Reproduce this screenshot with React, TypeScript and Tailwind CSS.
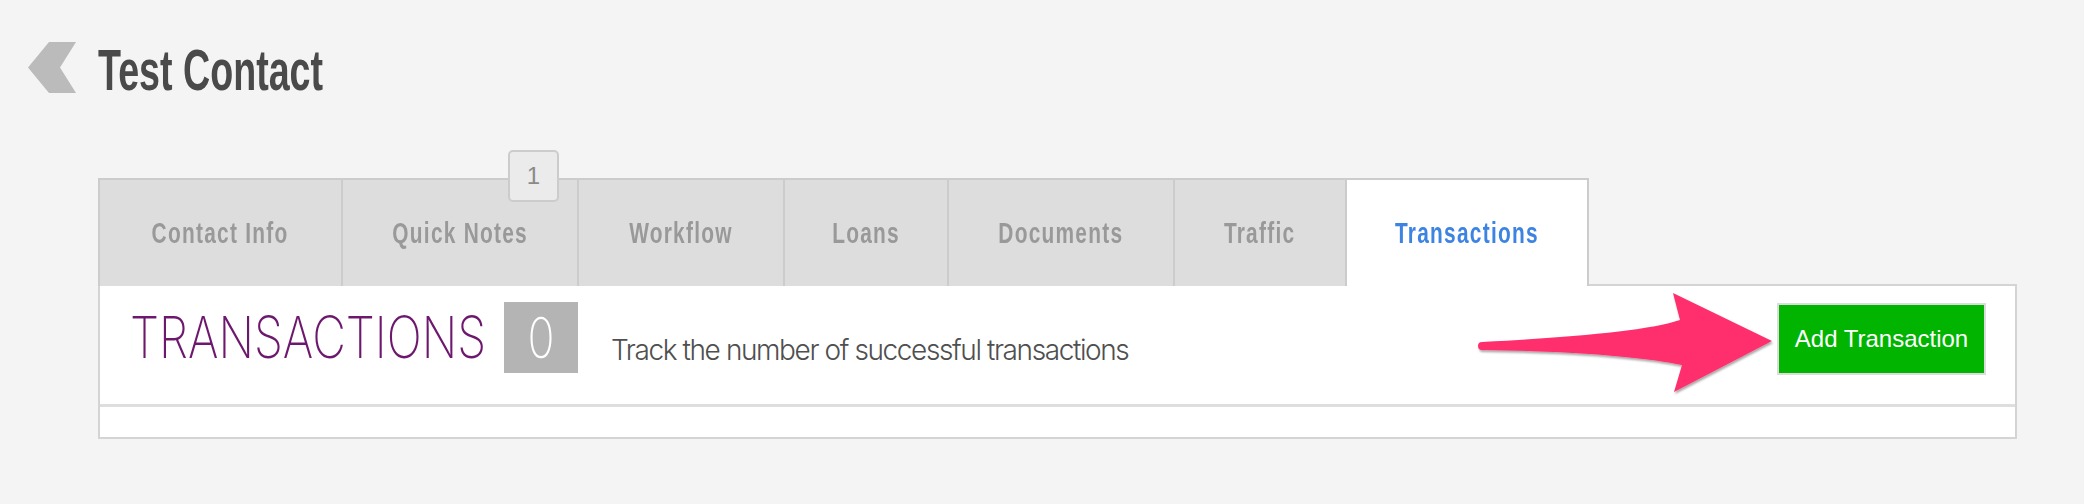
import React from 'react';

const tabs = [
  { id: 'contact', label: 'Contact Info', width: 'w-[243px]' },
  { id: 'notes', label: 'Quick Notes', width: 'w-[236px]', badge: 1 },
  { id: 'workflow', label: 'Workflow', width: 'w-[206px]' },
  { id: 'loans', label: 'Loans', width: 'w-[164px]' },
  { id: 'documents', label: 'Documents', width: 'w-[226px]' },
  { id: 'traffic', label: 'Traffic', width: 'w-[172px]' },
];

function BackChevron() {
  return (
    <svg width="48" height="51" viewBox="0 0 48 51" className="shrink-0">
      <polygon points="21,0 48,0 32,25.5 48,51 21,51 0,25.5" fill="#bbbbbb" />
    </svg>
  );
}

function Arrow() {
  return (
    <svg
      width="320"
      height="115"
      viewBox="0 0 320 115"
      className="absolute left-[1370px] top-[-1px] overflow-visible pointer-events-none"
    >
      <defs>
        <filter id="arrowShadow" x="-10%" y="-20%" width="120%" height="140%">
          <feDropShadow dx="1" dy="2" stdDeviation="1.3" floodColor="#000" floodOpacity="0.35" />
        </filter>
      </defs>
      <path
        d="M 12 57 C 110 52, 180 45, 210 35 L 203 8 L 302 56 L 204 107 L 212 80 C 180 73, 110 66, 12 65 A 4 4 0 0 1 12 57 Z"
        fill="#ff2f6d"
        filter="url(#arrowShadow)"
      />
    </svg>
  );
}

export default function App() {
  return (
    <div className="min-h-screen bg-[#f4f4f4] font-['Liberation_Sans',Arial,sans-serif]">
      {/* Header */}
      <header className="flex items-start h-[178px] pl-[28px] pt-[42px]">
        <BackChevron />
        <div className="ml-[22px] w-[226px]">
          <span className="inline-block origin-left scale-x-[0.66] whitespace-nowrap text-[57px] leading-none font-bold text-[#4a4a4a]">
            Test Contact
          </span>
        </div>
      </header>

      <div className="ml-[98px] w-[1919px]">
        {/* Tabs */}
        <div className="relative z-10 -mb-[2px] flex">
          {tabs.map((tab) => (
            <div
              key={tab.id}
              className={`relative ${tab.width} h-[108px] shrink-0 flex items-center justify-center bg-[#dddddd] border-t-2 border-l-2 border-[#cccccc]`}
            >
              <span className="inline-block scale-x-[0.72] whitespace-nowrap text-[29px] leading-none font-bold tracking-[0.06em] text-[#999999]">
                {tab.label}
              </span>
              {tab.badge && (
                <div className="absolute left-[165px] top-[-30px] w-[51px] h-[52px] rounded-[5px] border-2 border-[#cccccc] bg-[#ebebeb] flex items-center justify-center text-[24px] leading-none text-[#8a8a8a]">
                  {tab.badge}
                </div>
              )}
            </div>
          ))}
          <div className="w-[244px] h-[108px] shrink-0 flex items-center justify-center bg-white border-t-2 border-l-2 border-r-2 border-[#cccccc]">
            <span className="inline-block scale-x-[0.72] whitespace-nowrap text-[29px] leading-none font-bold tracking-[0.06em] text-[#3d84e2]">
              Transactions
            </span>
          </div>
        </div>

        {/* Panel */}
        <div className="border-2 border-[#d4d4d4] bg-white">
          <div className="relative flex items-start h-[121px] pl-[30px] pr-[29px] border-b-[3px] border-[#dedede]">
            <div className="w-[357px] mt-[22px]">
              <span className="inline-block origin-left scale-x-[0.8] whitespace-nowrap font-['Inter',sans-serif] font-extralight text-[58px] leading-none text-[#6d186e]">
                TRANSACTIONS
              </span>
            </div>
            <div className="ml-[17px] mt-[16px] w-[74px] h-[71px] shrink-0 bg-[#b4b4b4] flex items-center justify-center">
              <span className="inline-block scale-x-[0.8] font-['Inter',sans-serif] font-extralight text-[56px] leading-none text-white">
                0
              </span>
            </div>
            <div className="ml-[33px] mt-[50px] whitespace-nowrap font-['Inter',sans-serif] font-light text-[28px] leading-none tracking-[-0.05em] text-[#4f4f4f]">
              Track the number of successful transactions
            </div>
            <button className="ml-auto mt-[17px] w-[209px] h-[72px] shrink-0 border-2 border-[#dcdcdc] bg-[#00b400] text-white text-[24px] leading-none">
              Add Transaction
            </button>
            <Arrow />
          </div>
          <div className="h-[30px]" />
        </div>
      </div>
    </div>
  );
}
